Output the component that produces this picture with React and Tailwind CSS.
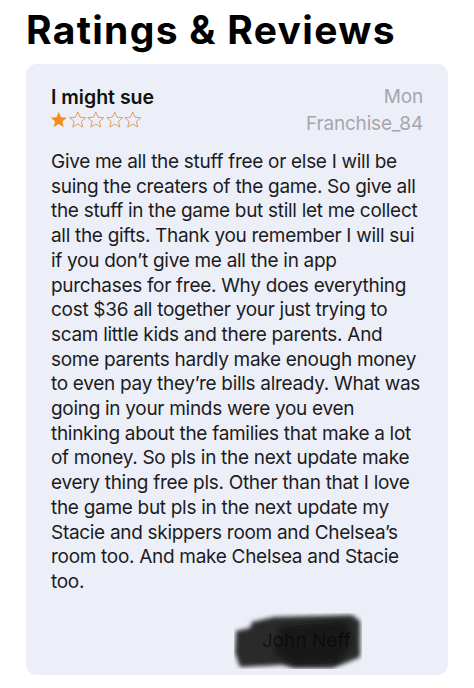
import React from "react";

const lines = [
  "Give me all the stuff free or else I will be",
  "suing the creaters of the game. So give all",
  "the stuff in the game but still let me collect",
  "all the gifts. Thank you remember I will sui",
  "if you don’t give me all the in app",
  "purchases for free. Why does everything",
  "cost $36 all together your just trying to",
  "scam little kids and there parents. And",
  "some parents hardly make enough money",
  "to even pay they’re bills already. What was",
  "going in your minds were you even",
  "thinking about the families that make a lot",
  "of money. So pls in the next update make",
  "every thing free pls. Other than that I love",
  "the game but pls in the next update my",
  "Stacie and skippers room and Chelsea’s",
  "room too. And make Chelsea and Stacie",
  "too.",
];

function Star({ filled }) {
  const d =
    "M7 0.7 L8.8 4.9 L13.4 5.3 L9.9 8.3 L11 12.8 L7 10.4 L3 12.8 L4.1 8.3 L0.6 5.3 L5.2 4.9 Z";
  return (
    <svg width="17.5" height="17" viewBox="0 0 14 13.5">
      {filled ? (
        <path d={d} fill="#f28c1c" />
      ) : (
        <path d={d} fill="none" stroke="#d8a25e" strokeWidth="0.8" strokeLinejoin="round" />
      )}
    </svg>
  );
}

export default function App() {
  return (
    <div
      className="w-[474px] h-[688px] bg-white overflow-hidden"
      style={{ fontFamily: "Inter, 'Noto Sans', sans-serif" }}
    >
      <h1 className="pl-[26px] pt-[7px] text-[39px] leading-[45px] font-bold text-black tracking-[1.3px]">
        Ratings &amp; Reviews
      </h1>
      <div className="mx-[26px] mt-[12px] h-[611px] rounded-[11px] bg-[#edeff8] pl-[25px] pr-[25px] pt-[20px] flex flex-col">
        <div className="flex justify-between">
          <div className="flex flex-col">
            <div className="text-[19.5px] leading-[26px] font-semibold text-[#111]">I might sue</div>
            <div className="flex gap-[1px] mt-[1px] -ml-[1px]">
              <Star filled />
              <Star />
              <Star />
              <Star />
              <Star />
            </div>
          </div>
          <div className="flex flex-col items-end text-[19px] leading-[26px] text-[#a5a6ab] tracking-[-0.2px]">
            <div>Mon</div>
            <div className="mt-[1px]">Franchise_84</div>
          </div>
        </div>
        <div className="mt-[13px] text-[19px] leading-[24.7px] text-[#1c1c1e] tracking-[-0.3px]">
          {lines.map((l, i) => (
            <div key={i} className="whitespace-nowrap">
              {l}
            </div>
          ))}
        </div>
        <div className="flex justify-end pr-[61px] mt-[18px]">
          <div className="relative w-[128px] h-[56px]">
            <svg width="128" height="56" viewBox="0 0 128 56" className="absolute inset-0">
              <defs>
                <filter id="bl" x="-20%" y="-20%" width="140%" height="140%">
                  <feGaussianBlur stdDeviation="2.2" />
                </filter>
              </defs>
              <g filter="url(#bl)" fill="#2a2a2a">
                <path d="M18 9 L40 4 L118 2 L126 8 L126 44 L112 50 L98 55 L60 55 L48 52 L6 54 L1 40 L2 18 L16 15 Z" />
              </g>
              <g filter="url(#bl)" fill="#151515" opacity="0.85">
                <path d="M46 14 L112 8 L118 30 L104 50 L60 52 L40 40 Z" />
              </g>
            </svg>
            <div className="absolute left-[28px] top-[18px] text-[19px] leading-[20px] text-[#050505] blur-[0.7px] opacity-60">
              John Neff
            </div>
          </div>
        </div>
      </div>
    </div>
  );
}
